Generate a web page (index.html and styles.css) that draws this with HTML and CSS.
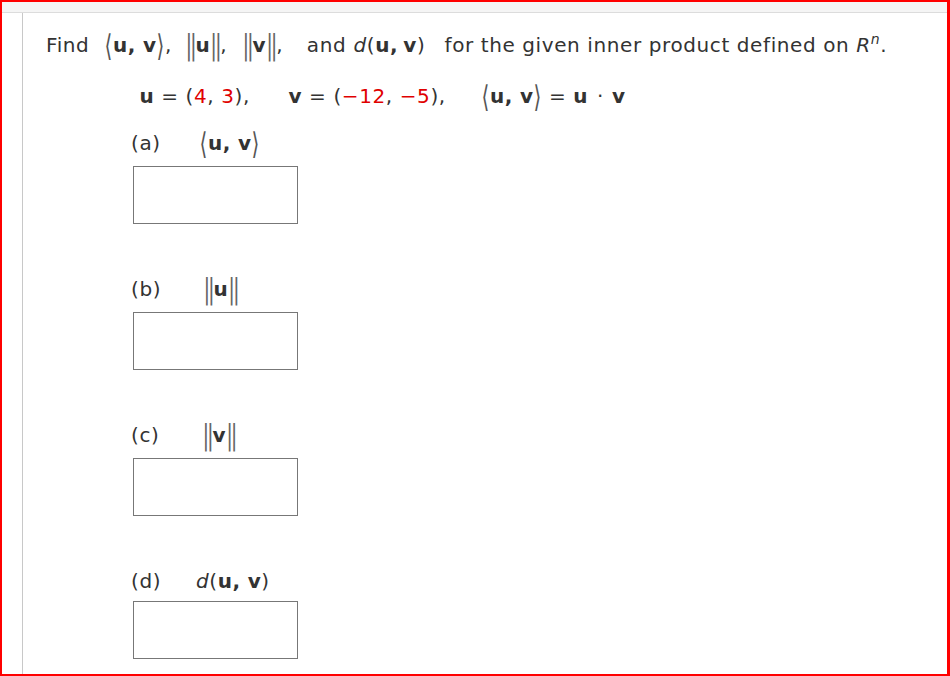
FILE: index.html
```html
<!DOCTYPE html>
<html>
<head>
<meta charset="utf-8">
<link rel="stylesheet" href="styles.css">
</head>
<body>
<div class="frame">
  <div class="topbar"></div>
  <div class="main">
    <div class="gutter"></div>
    <div class="content">
      <div class="line q"><span class="seg s0">Find</span><span class="seg g1"><span class="ang">⟨</span><span class="b">u,</span> <span class="b">v</span><span class="ang">⟩</span>,</span><span class="seg g2"><span class="bar">||</span><span class="b">u</span><span class="bar">||</span>,</span><span class="seg g3"><span class="bar">||</span><span class="b">v</span><span class="bar">||</span>,</span><span class="seg g4">and</span><span class="seg g5"><span class="i">d</span>(<span class="b">u,</span><span class="ts"></span><span class="b">v</span>)</span>for the given inner product defined on <span class="i">R</span><sup class="i sup">n</sup>.</div>
      <div class="line given"><span class="seg h1"><span class="b">u</span> = (<span class="red">4</span>, <span class="red">3</span>),</span><span class="seg h2"><span class="b">v</span> = (<span class="red">−12</span>, <span class="red">−5</span>),</span><span class="ang">⟨</span><span class="b">u,</span> <span class="b">v</span><span class="ang">⟩</span> = <span class="b">u</span><span class="dot">·</span><span class="b">v</span></div>
      <div class="parts">
        <div class="part">
          <div class="line label"><span class="pl">(a)</span><span class="ex ex-a"><span class="ang">⟨</span><span class="b">u,</span> <span class="b">v</span><span class="ang">⟩</span></span></div>
          <div class="box"></div>
        </div>
        <div class="part">
          <div class="line label"><span class="pl">(b)</span><span class="ex ex-b"><span class="bar">||</span><span class="b">u</span><span class="bar">||</span></span></div>
          <div class="box"></div>
        </div>
        <div class="part">
          <div class="line label"><span class="pl">(c)</span><span class="ex ex-c"><span class="bar">||</span><span class="b">v</span><span class="bar">||</span></span></div>
          <div class="box"></div>
        </div>
        <div class="part part-last">
          <div class="line label"><span class="pl">(d)</span><span class="ex ex-d"><span class="i">d</span>(<span class="b">u,</span> <span class="b">v</span>)</span></div>
          <div class="box"></div>
        </div>
      </div>
    </div>
  </div>
</div>
</body>
</html>
```
FILE: styles.css
```css
html, body {
  margin: 0;
  padding: 0;
  background: #fff;
}
body {
  font-family: "DejaVu Sans", Verdana, sans-serif;
  font-size: 20px;
  letter-spacing: 0.6px;
  color: #333;
}
.frame {
  width: 950px;
  height: 676px;
  box-sizing: border-box;
  border: 2px solid #ff0000;
  border-right-width: 3px;
  display: flex;
  flex-direction: column;
  overflow: hidden;
}
.topbar {
  flex: none;
  height: 10px;
  background: #f5f5f5;
  border-bottom: 1px solid #dcdcdc;
}
.main {
  flex: 1;
  display: flex;
}
.gutter {
  flex: none;
  width: 20px;
  border-right: 1px solid #c8c8c8;
}
.content {
  flex: 1;
  padding: 17px 0 0 23px;
}
.line {
  height: 30px;
  line-height: 30px;
  white-space: nowrap;
}
.seg { display: inline-block; }
.s0 { width: 58.5px; }
.g1 { width: 81px; }
.g2 { width: 57px; }
.g3 { width: 64.3px; }
.g4 { width: 46.7px; }
.g5 { width: 91px; }
.ts { display: inline-block; width: 5px; }
.b { font-weight: bold; }
.i { font-style: italic; }
.red { color: #e00000; }
.ang {
  display: inline-block;
  transform: scaleY(1.5);
  color: #555;
  font-weight: normal;
}
.bar {
  display: inline-block;
  width: 10px;
  letter-spacing: -2.2px;
  transform: scaleY(1.4);
  color: #666;
  font-weight: normal;
}
.dot {
  display: inline-block;
  margin: 0 8px 0 9px;
}
.sup {
  font-size: 14px;
  vertical-align: 8px;
  line-height: 0;
}
.given {
  margin-top: 21px;
  padding-left: 93.5px;
}
.h1 { width: 149px; }
.h2 { width: 193px; }
.parts {
  margin-top: 17px;
  padding-left: 87px;
}
.part {
  margin-bottom: 50px;
}
.label { margin-left: -2px; }
.pl {
  display: inline-block;
  width: 65px;
}
.ex { display: inline-block; }
.ex-a { margin-left: 3.5px; }
.ex-b { margin-left: 7.5px; }
.ex-c { margin-left: 6.5px; }
.ex-d { margin-left: 0; }
.box {
  margin-top: 8px;
  width: 165px;
  height: 58px;
  box-sizing: border-box;
  border: 1px solid #777;
  background: #fff;
}
.part-last .box { margin-top: 5px; }
```
